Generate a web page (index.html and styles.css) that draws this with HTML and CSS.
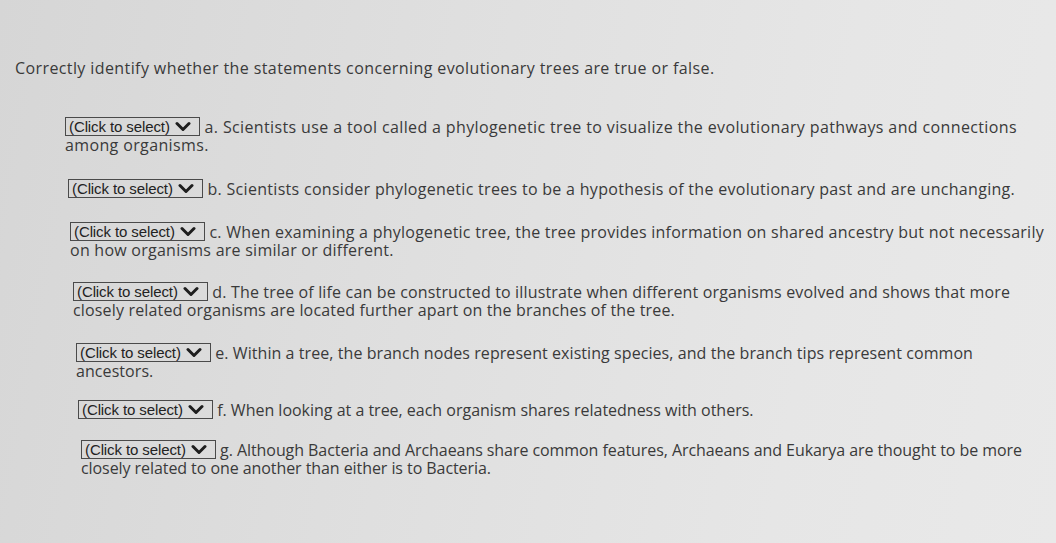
FILE: index.html
```html
<!DOCTYPE html>
<html lang="en">
<head>
<meta charset="utf-8">
<title>Evolutionary trees</title>
<link rel="stylesheet" href="styles.css">
</head>
<body>
<main class="page">
  <p class="prompt">Correctly identify whether the statements concerning evolutionary trees are true or false.</p>
  <ul class="items">
    <li class="item"><span class="select"><span class="select-label">(Click to select)</span><svg class="chev" viewBox="0 0 16 11" width="16" height="11"><path d="M2 2.5 L8 8.5 L14 2.5" fill="none" stroke="#1e1e1e" stroke-width="3" stroke-linecap="round" stroke-linejoin="round"/></svg></span> <span class="statement">a. Scientists use a tool called a phylogenetic tree to visualize the evolutionary pathways and connections among organisms.</span></li>
    <li class="item"><span class="select"><span class="select-label">(Click to select)</span><svg class="chev" viewBox="0 0 16 11" width="16" height="11"><path d="M2 2.5 L8 8.5 L14 2.5" fill="none" stroke="#1e1e1e" stroke-width="3" stroke-linecap="round" stroke-linejoin="round"/></svg></span> <span class="statement">b. Scientists consider phylogenetic trees to be a hypothesis of the evolutionary past and are unchanging.</span></li>
    <li class="item"><span class="select"><span class="select-label">(Click to select)</span><svg class="chev" viewBox="0 0 16 11" width="16" height="11"><path d="M2 2.5 L8 8.5 L14 2.5" fill="none" stroke="#1e1e1e" stroke-width="3" stroke-linecap="round" stroke-linejoin="round"/></svg></span> <span class="statement">c. When examining a phylogenetic tree, the tree provides information on shared ancestry but not necessarily on how organisms are similar or different.</span></li>
    <li class="item"><span class="select"><span class="select-label">(Click to select)</span><svg class="chev" viewBox="0 0 16 11" width="16" height="11"><path d="M2 2.5 L8 8.5 L14 2.5" fill="none" stroke="#1e1e1e" stroke-width="3" stroke-linecap="round" stroke-linejoin="round"/></svg></span> <span class="statement">d. The tree of life can be constructed to illustrate when different organisms evolved and shows that more closely related organisms are located further apart on the branches of the tree.</span></li>
    <li class="item"><span class="select"><span class="select-label">(Click to select)</span><svg class="chev" viewBox="0 0 16 11" width="16" height="11"><path d="M2 2.5 L8 8.5 L14 2.5" fill="none" stroke="#1e1e1e" stroke-width="3" stroke-linecap="round" stroke-linejoin="round"/></svg></span> <span class="statement">e. Within a tree, the branch nodes represent existing species, and the branch tips represent common ancestors.</span></li>
    <li class="item"><span class="select"><span class="select-label">(Click to select)</span><svg class="chev" viewBox="0 0 16 11" width="16" height="11"><path d="M2 2.5 L8 8.5 L14 2.5" fill="none" stroke="#1e1e1e" stroke-width="3" stroke-linecap="round" stroke-linejoin="round"/></svg></span> <span class="statement">f. When looking at a tree, each organism shares relatedness with others.</span></li>
    <li class="item"><span class="select"><span class="select-label">(Click to select)</span><svg class="chev" viewBox="0 0 16 11" width="16" height="11"><path d="M2 2.5 L8 8.5 L14 2.5" fill="none" stroke="#1e1e1e" stroke-width="3" stroke-linecap="round" stroke-linejoin="round"/></svg></span> <span class="statement">g. Although Bacteria and Archaeans share common features, Archaeans and Eukarya are thought to be more closely related to one another than either is to Bacteria.</span></li>
  </ul>
</main>
</body>
</html>
```

FILE: styles.css
```css
html, body {
  margin: 0;
  padding: 0;
}
body {
  width: 1056px;
  height: 543px;
  overflow: hidden;
  background: linear-gradient(100deg, #d6d6d6 0%, #dfdfdf 40%, #e6e6e6 75%, #e9e9e9 100%);
  font-family: "Open Sans", Lato, sans-serif;
  color: #3a3a3a;
}
.page {
  padding: 59px 0 0 15px;
  box-sizing: border-box;
  width: 1056px;
}
.prompt {
  margin: 0;
  font-size: 16px;
  line-height: 18px;
  letter-spacing: 0.4px;
}
.items {
  list-style: none;
  margin: 41px 0 0 0;
  padding: 0;
}
.item {
  font-size: 16px;
  line-height: 18px;
  letter-spacing: 0.37px;
  margin: 0 0 26px 50px;
  width: 985px;
}
.item:nth-child(2) { margin-left: 53px; margin-bottom: 25px; letter-spacing: 0.3px; }
.item:nth-child(3) { margin-left: 55px; margin-bottom: 24px; letter-spacing: 0.25px; }
.item:nth-child(4) { margin-left: 58px; margin-bottom: 25px; letter-spacing: 0.16px; }
.item:nth-child(5) { margin-left: 61px; margin-bottom: 21px; letter-spacing: 0.07px; width: 950px; }
.item:nth-child(6) { margin-left: 63px; margin-bottom: 22px; letter-spacing: -0.01px; }
.item:nth-child(7) { margin-left: 66px; letter-spacing: -0.07px; }
.select {
  display: inline-flex;
  align-items: center;
  box-sizing: border-box;
  width: 135px;
  height: 19px;
  margin: -1px 0 -2px 0;
  border: 1px solid #4a4a4a;
  padding: 0 0 0 3px;
  vertical-align: top;
  font-family: "Liberation Sans", Arial, sans-serif;
  font-size: 15px;
  letter-spacing: -0.1px;
  color: #222;
}
.select-label {
  line-height: 17px;
  margin-top: -1px;
}
.chev {
  display: block;
  margin-left: 5px;
}
.statement {
  color: #3a3a3a;
}
```
